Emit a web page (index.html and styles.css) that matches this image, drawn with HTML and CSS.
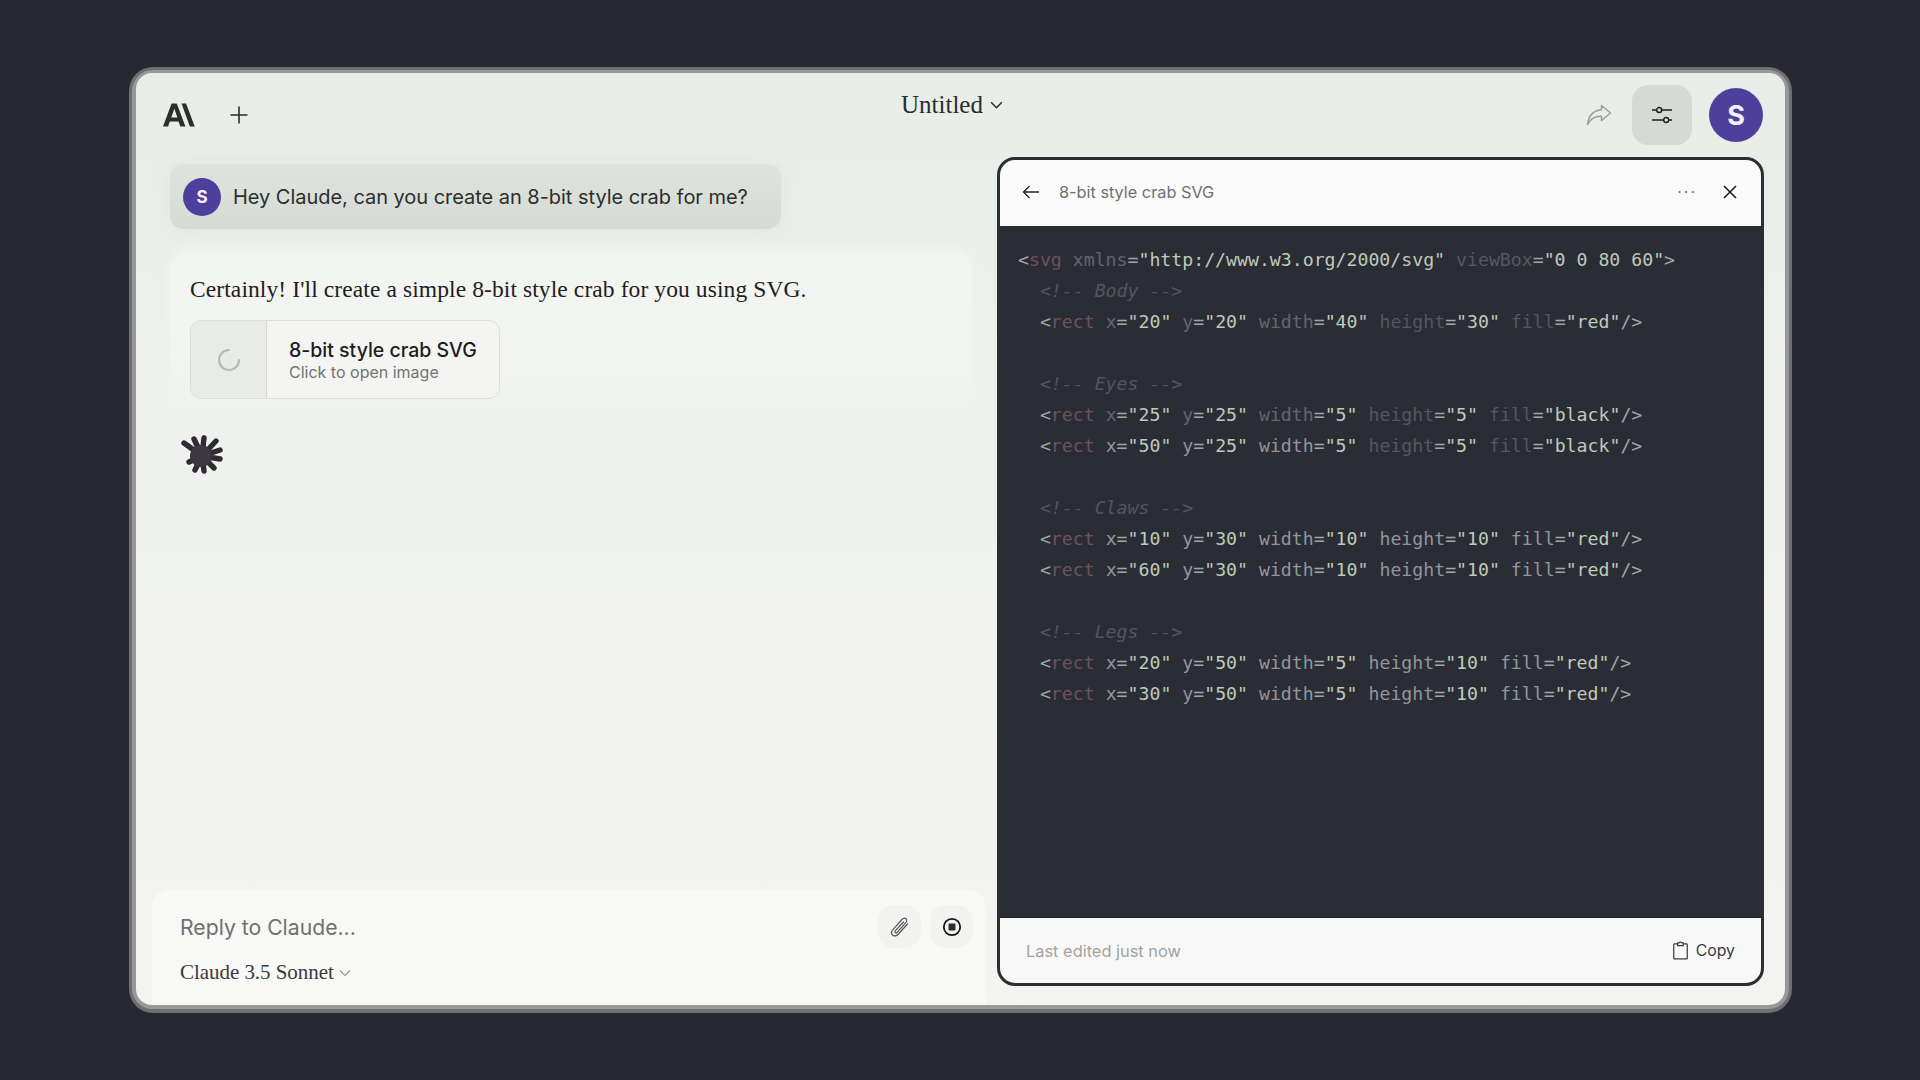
FILE: index.html
```html
<!DOCTYPE html>
<html lang="en">
<head>
<meta charset="utf-8">
<title>Claude artifact</title>
<link rel="stylesheet" href="styles.css">
</head>
<body>
<div class="window">
<div class="inner">
  <header class="topbar">
    <div class="top-left">
      <svg class="logo" viewBox="0 0 32 24" width="32" height="24"><path d="M0 23.500 8.600 .5h5.200l8.600 23h-5.100l-1.700-4.900H6.800l-1.700 4.900zM8.300 14.600h6.100L11.300 5.600zM18.500.5h4.600l8.600 23h-4.800z" fill="#2b2f2a"/></svg>
      <svg class="plus" viewBox="0 0 18 18" width="18" height="18"><path d="M9 .5v17M.5 9h17" stroke="#2b2f2a" stroke-width="1.600" fill="none"/></svg>
    </div>
    <div class="doc-title">
      <span>Untitled</span>
      <svg viewBox="0 0 14 9" width="13" height="8"><path d="M1 1.500 7 7.500 13 1.500" stroke="#25282a" stroke-width="1.600" fill="none"/></svg>
    </div>
    <div class="top-right">
      <svg class="share" viewBox="0 0 26 22" width="26" height="22"><path d="M15.500 1.500 24.500 9l-9 7.500v-4.200C9.500 12 4.500 14.500 1.500 20.500 2.500 12 7.500 6.500 15.500 5.800z" stroke="#9a9e99" stroke-width="1.500" fill="none" stroke-linejoin="round"/></svg>
      <div class="tune">
        <svg viewBox="0 0 22 18" width="22" height="18"><path d="M1 4h5M10.500 4H21M1 14h12M17.500 14H21" stroke="#1d1f20" stroke-width="1.400" fill="none"/><circle cx="8.200" cy="4" r="2.500" stroke="#1d1f20" stroke-width="1.400" fill="none"/><circle cx="15.200" cy="14" r="2.500" stroke="#1d1f20" stroke-width="1.400" fill="none"/></svg>
      </div>
      <div class="avatar avatar-big">S</div>
    </div>
  </header>
  <main class="main">
    <section class="chat">
      <div class="messages">
        <div class="user-msg">
          <div class="avatar avatar-small">S</div>
          <p class="user-text">Hey Claude, can you create an 8-bit style crab for me?</p>
        </div>
        <div class="bot-msg">
          <p class="bot-text">Certainly! I'll create a simple 8-bit style crab for you using SVG.</p>
          <div class="card">
            <div class="card-icon">
              <svg viewBox="0 0 24 24" width="24" height="24"><path d="M12 2A10 10 0 1 0 22 12" stroke="#b8bbb6" stroke-width="2.200" fill="none" stroke-linecap="round"/></svg>
            </div>
            <div class="card-body">
              <div class="card-title">8-bit style crab SVG</div>
              <div class="card-sub">Click to open image</div>
            </div>
          </div>
        </div>
        <svg class="burst" viewBox="0 0 44 40" width="44" height="40"><g stroke="#2f2a33" stroke-width="5.400" stroke-linecap="round"><path d="M22 21 4 8M22 21 14 4M22 21 24 3M22 21 36 6M22 21 40 15M22 21 40 24M22 21 34 33M22 21 24 36M22 21 15 35M22 21 9 27"/></g><circle cx="21" cy="21" r="11" fill="#3d3742"/></svg>
      </div>
      <div class="composer">
        <div class="composer-row">
          <span class="placeholder">Reply to Claude...</span>
          <div class="composer-btns">
            <div class="round-btn">
              <svg viewBox="0 0 20 22" width="20" height="22"><path d="M17.500 8 8.500 18c-2 2.200-4.700 2.300-6 1-1.400-1.400-1.200-3.700.6-5.600l8.900-9.900c1.300-1.400 3-1.600 4-.7 1.100 1 .9 2.700-.4 4.100l-8.200 9.200c-.8.900-1.700 1-2.200.5-.5-.5-.4-1.300.4-2.200L13.500 6" stroke="#55575a" stroke-width="1.200" fill="none" stroke-linecap="round"/></svg>
            </div>
            <div class="round-btn">
              <svg viewBox="0 0 20 20" width="20" height="20"><circle cx="10" cy="10" r="8.200" stroke="#17181a" stroke-width="1.800" fill="none"/><rect x="6.500" y="6.500" width="7" height="7" rx="1" fill="#2c2d30"/></svg>
            </div>
          </div>
        </div>
        <div class="model">
          <span>Claude 3.5 Sonnet</span>
          <svg viewBox="0 0 12 8" width="12" height="8"><path d="M1 1.500 6 6.500 11 1.500" stroke="#9a9a9a" stroke-width="1.200" fill="none"/></svg>
        </div>
      </div>
    </section>
    <section class="panel">
      <div class="panel-head">
        <svg viewBox="0 0 18 14" width="18" height="14"><path d="M17 7H1.500M7.500 1 1.500 7l6 6" stroke="#25272a" stroke-width="1.400" fill="none"/></svg>
        <span class="panel-title">8-bit style crab SVG</span>
        <span class="dots">···</span>
        <svg viewBox="0 0 14 14" width="14" height="14"><path d="M1 1l12 12M13 1 1 13" stroke="#17181a" stroke-width="1.500" fill="none"/></svg>
      </div>
<pre class="code"><span class="p">&lt;</span><span class="t">svg</span> <span class="a dim">xmlns</span><span class="p">=</span><span class="s">"http://www.w3.org/2000/svg"</span> <span class="a faint">viewBox</span><span class="p">=</span><span class="s">"0 0 80 60"</span><span class="p">&gt;</span>
  <span class="c">&lt;!-- Body --&gt;</span>
  <span class="p">&lt;</span><span class="t">rect</span> <span class="a dim">x</span><span class="p">=</span><span class="s">"20"</span> <span class="a dim">y</span><span class="p">=</span><span class="s">"20"</span> <span class="a dim">width</span><span class="p">=</span><span class="s">"40"</span> <span class="a faint">height</span><span class="p">=</span><span class="s">"30"</span> <span class="a faint">fill</span><span class="p">=</span><span class="s">"red"</span><span class="p">/&gt;</span>

  <span class="c">&lt;!-- Eyes --&gt;</span>
  <span class="p">&lt;</span><span class="t">rect</span> <span class="a dim">x</span><span class="p">=</span><span class="s">"25"</span> <span class="a dim">y</span><span class="p">=</span><span class="s">"25"</span> <span class="a dim">width</span><span class="p">=</span><span class="s">"5"</span> <span class="a faint">height</span><span class="p">=</span><span class="s">"5"</span> <span class="a faint">fill</span><span class="p">=</span><span class="s">"black"</span><span class="p">/&gt;</span>
  <span class="p">&lt;</span><span class="t">rect</span> <span class="a">x</span><span class="p">=</span><span class="s">"50"</span> <span class="a">y</span><span class="p">=</span><span class="s">"25"</span> <span class="a">width</span><span class="p">=</span><span class="s">"5"</span> <span class="a faint">height</span><span class="p">=</span><span class="s">"5"</span> <span class="a faint">fill</span><span class="p">=</span><span class="s">"black"</span><span class="p">/&gt;</span>

  <span class="c">&lt;!-- Claws --&gt;</span>
  <span class="p">&lt;</span><span class="t">rect</span> <span class="a">x</span><span class="p">=</span><span class="s">"10"</span> <span class="a">y</span><span class="p">=</span><span class="s">"30"</span> <span class="a">width</span><span class="p">=</span><span class="s">"10"</span> <span class="a">height</span><span class="p">=</span><span class="s">"10"</span> <span class="a">fill</span><span class="p">=</span><span class="s">"red"</span><span class="p">/&gt;</span>
  <span class="p">&lt;</span><span class="t">rect</span> <span class="a">x</span><span class="p">=</span><span class="s">"60"</span> <span class="a">y</span><span class="p">=</span><span class="s">"30"</span> <span class="a">width</span><span class="p">=</span><span class="s">"10"</span> <span class="a">height</span><span class="p">=</span><span class="s">"10"</span> <span class="a">fill</span><span class="p">=</span><span class="s">"red"</span><span class="p">/&gt;</span>

  <span class="c">&lt;!-- Legs --&gt;</span>
  <span class="p">&lt;</span><span class="t">rect</span> <span class="a">x</span><span class="p">=</span><span class="s">"20"</span> <span class="a">y</span><span class="p">=</span><span class="s">"50"</span> <span class="a">width</span><span class="p">=</span><span class="s">"5"</span> <span class="a">height</span><span class="p">=</span><span class="s">"10"</span> <span class="a">fill</span><span class="p">=</span><span class="s">"red"</span><span class="p">/&gt;</span>
  <span class="p">&lt;</span><span class="t">rect</span> <span class="a">x</span><span class="p">=</span><span class="s">"30"</span> <span class="a">y</span><span class="p">=</span><span class="s">"50"</span> <span class="a">width</span><span class="p">=</span><span class="s">"5"</span> <span class="a">height</span><span class="p">=</span><span class="s">"10"</span> <span class="a">fill</span><span class="p">=</span><span class="s">"red"</span><span class="p">/&gt;</span></pre>
      <div class="panel-foot">
        <span class="edited">Last edited just now</span>
        <div class="copy">
          <svg viewBox="0 0 16 20" width="15" height="19"><path d="M4.500 3H1.500C1 3 .8 3.300 .8 3.800v14.400c0 .5.300.8.800.8h12.800c.5 0 .8-.3.800-.8V3.800c0-.5-.3-.8-.8-.8h-3M5 1.800h1.500C6.800.8 9.200.8 9.500 1.800H11v3H5z" stroke="#3a3b3d" stroke-width="1.300" fill="none"/></svg>
          <span>Copy</span>
        </div>
      </div>
    </section>
  </main>
</div>
</div>
</body>
</html>
```
FILE: styles.css
```css
* { box-sizing: border-box; }
html, body { margin: 0; height: 100%; }
body {
  background: #282734;
  padding: 67px 128px 67px 129px;
  font-family: "Inter", "Liberation Sans", sans-serif;
  overflow: hidden;
}
p { margin: 0; }

.window {
  width: 1663px;
  height: 946px;
  border: 3px solid #6f6f73;
  border-bottom-width: 4px;
  padding: 3px 4px 4px;
  border-radius: 24px;
  background: #98989a;
}
.inner {
  height: 100%;
  border-radius: 16px;
  overflow: hidden;
  display: flex;
  flex-direction: column;
  background: linear-gradient(180deg, #e8ede8 0%, #eef1ed 35%, #f2f3f1 70%, #f3f4f2 100%);
}

.topbar {
  height: 84px;
  flex: none;
  display: grid;
  grid-template-columns: 1fr auto 1fr;
  align-items: center;
  padding: 0 22px 0 27px;
}
.top-left { display: flex; align-items: center; gap: 35px; }
.plus { display: block; }
.logo { display: block; }
.doc-title {
  display: flex;
  align-items: center;
  gap: 7px;
  padding: 0 22px 20px 0;
  font-family: "Liberation Serif", serif;
  font-size: 25px;
  color: #2a2c2c;
}
.top-right { display: flex; align-items: center; justify-content: flex-end; }
.share { margin-right: 20px; }
.tune {
  width: 60px;
  height: 60px;
  border-radius: 16px;
  background: #d5dbd4;
  display: flex;
  align-items: center;
  justify-content: center;
  margin-right: 17px;
}
.avatar {
  border-radius: 50%;
  background: #4f3f9c;
  color: #f3f1fb;
  font-weight: 700;
  display: flex;
  align-items: center;
  justify-content: center;
  flex: none;
}
.avatar-big { width: 54px; height: 54px; font-size: 27px; }
.avatar-small { width: 38px; height: 38px; font-size: 17px; }

.main {
  flex: 1;
  min-height: 0;
  display: flex;
  gap: 11px;
  padding-left: 16px;
  padding-right: 21px;
}

.chat {
  width: 834px;
  flex: none;
  display: flex;
  flex-direction: column;
}
.messages {
  flex: 1;
  min-height: 0;
  padding: 7px 14px 0 18px;
  display: flex;
  flex-direction: column;
}
.user-msg {
  width: 611px;
  height: 65px;
  flex: none;
  display: flex;
  align-items: center;
  gap: 12px;
  padding-left: 13px;
  border-radius: 14px;
  background: linear-gradient(180deg, #dfe3dd 0%, #d5dbd4 100%);
  box-shadow: 0 0 14px rgba(214, 220, 213, .5);
}
.user-text { font-size: 20px; color: #2c2e2d; letter-spacing: -.035px; }
.bot-msg {
  margin-top: 24px;
  height: 170px;
  flex: none;
  padding: 21px 20px 0;
  border-radius: 18px;
  background: linear-gradient(180deg, #f3f5f2 0%, #f2f4f1 70%, rgba(242, 244, 241, 0) 100%);
  box-shadow: 0 -4px 12px rgba(243, 245, 242, .9);
}
.bot-text {
  font-family: "Liberation Serif", serif;
  font-size: 23.500px;
  letter-spacing: .1px;
  line-height: 30px;
  color: #1f2020;
}
.card {
  margin-top: 16px;
  width: 310px;
  height: 79px;
  display: flex;
  border: 1px solid #dcdfdb;
  border-radius: 11px;
  overflow: hidden;
  background: #f4f5f3;
}
.card-icon {
  width: 76px;
  flex: none;
  display: flex;
  align-items: center;
  justify-content: center;
  background: #e9ebe8;
  border-right: 1px solid #d6d9d5;
}
.card-body { padding-left: 22px; display: flex; flex-direction: column; justify-content: center; }
.card-title { font-size: 19.500px; font-weight: 500; color: #1c1d1d; line-height: 24px; }
.card-sub { font-size: 16px; color: #727472; line-height: 20px; }
.burst { margin: 12px 0 0 10px; flex: none; }

.composer {
  height: 115px;
  flex: none;
  border-radius: 18px 18px 0 0;
  background: #f8f8f7;
  padding: 0 13px 0 28px;
  display: flex;
  flex-direction: column;
}
.composer-row {
  display: flex;
  align-items: center;
  justify-content: space-between;
  padding-top: 15px;
}
.placeholder { font-size: 21.200px; color: #6f706f; }
.composer-btns { display: flex; gap: 9px; }
.round-btn {
  width: 43px;
  height: 43px;
  border-radius: 16px;
  background: #f2f3f1;
  display: flex;
  align-items: center;
  justify-content: center;
}
.model {
  margin-top: 12px;
  display: flex;
  align-items: center;
  gap: 5px;
  font-family: "Liberation Serif", serif;
  font-size: 21px;
  letter-spacing: -.05px;
  color: #3a3b3b;
}

.panel {
  width: 767px;
  height: 829px;
  flex: none;
  display: flex;
  flex-direction: column;
  border: 3px solid #2d2d34;
  border-radius: 18px;
  overflow: hidden;
  background: #2b2d36;
}
.panel-head {
  height: 66px;
  flex: none;
  background: #fafafa;
  display: flex;
  align-items: center;
  padding: 0 24px 2px 22px;
}
.panel-title { margin-left: 19px; font-size: 16.300px; color: #6f7070; flex: 1; }
.dots { font-size: 16px; color: #7a7b7b; letter-spacing: 2px; margin-right: 26px; }
.code {
  flex: 1;
  margin: 0;
  padding: 18px 0 0 18px;
  background: #2b2d36;
  font-family: "DejaVu Sans Mono", monospace;
  font-size: 18.200px;
  line-height: 31px;
  color: #bec9b7;
  white-space: pre;
  overflow: hidden;
}
.p { color: #a3a5a5; }
.t { color: #6d525c; }
.a { color: #92959a; }
.a.dim { color: #63656c; }
.a.faint { color: #55575e; }
.s { color: #bfcab8; }
.c { color: #54565d; font-style: italic; }
.panel-foot {
  height: 66px;
  flex: none;
  background: #f8f8f8;
  border-top: 1px solid #1f2026;
  display: flex;
  align-items: center;
  justify-content: space-between;
  padding: 0 26px 0 26px;
  font-size: 16.400px;
}
.edited { color: #a2a3a3; }
.copy { display: flex; align-items: center; gap: 8px; color: #3a3b3d; font-size: 15.800px; }
```
